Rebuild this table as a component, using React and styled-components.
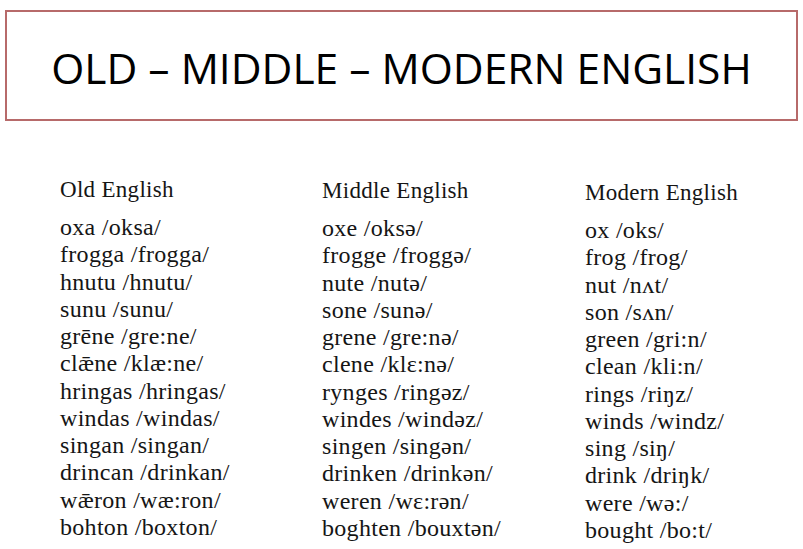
import React from "react";
import styled, { createGlobalStyle } from "styled-components";

const Global = createGlobalStyle`
  html, body { margin: 0; padding: 0; background: #fff; }
  body { width: 803px; height: 549px; overflow: hidden; }
`;

const Page = styled.div`
  width: 803px;
  height: 549px;
  box-sizing: border-box;
  padding: 10px 5px 0 5px;
  background: #fff;
`;

const TitleBox = styled.div`
  height: 111px;
  box-sizing: border-box;
  border: 2px solid #b76a6a;
  display: flex;
  align-items: center;
  justify-content: center;
`;

const Title = styled.h1`
  margin: 0;
  font-family: "Open Sans", "Liberation Sans", sans-serif;
  font-weight: 400;
  font-size: 42.5px;
  line-height: 1;
  color: #000;
  white-space: nowrap;
  padding-top: 6px;
`;

const Columns = styled.div`
  display: grid;
  grid-template-columns: 262px 263px 1fr;
  padding: 56px 0 0 55px;
  font-family: "Liberation Serif", "Times New Roman", serif;
  color: #151515;
`;

const Column = styled.div`
  display: flex;
  flex-direction: column;
  padding-top: ${(p) => p.$shift || 0}px;
`;

const Heading = styled.div`
  font-size: 23px;
  line-height: 26px;
  letter-spacing: 0.3px;
  margin-bottom: 11px;
`;

const Row = styled.div`
  font-size: 24px;
  line-height: 27.25px;
  letter-spacing: 0.3px;
  white-space: nowrap;
`;

const data = [
  {
    title: "Old English",
    shift: 0,
    rows: [
      "oxa /oksa/",
      "frogga /frogga/",
      "hnutu /hnutu/",
      "sunu /sunu/",
      "grēne /gre:ne/",
      "clǣne /klæ:ne/",
      "hringas /hringas/",
      "windas /windas/",
      "singan /singan/",
      "drincan /drinkan/",
      "wǣron /wæ:ron/",
      "bohton /boxton/",
    ],
  },
  {
    title: "Middle English",
    shift: 1,
    rows: [
      "oxe /oksə/",
      "frogge /froggə/",
      "nute /nutə/",
      "sone /sunə/",
      "grene /gre:nə/",
      "clene /klɛ:nə/",
      "rynges /ringəz/",
      "windes /windəz/",
      "singen /singən/",
      "drinken /drinkən/",
      "weren /wɛ:rən/",
      "boghten /bouxtən/",
    ],
  },
  {
    title: "Modern English",
    shift: 3,
    rows: [
      "ox /oks/",
      "frog /frog/",
      "nut /nʌt/",
      "son /sʌn/",
      "green /gri:n/",
      "clean /kli:n/",
      "rings /riŋz/",
      "winds /windz/",
      "sing /siŋ/",
      "drink /driŋk/",
      "were /wə:/",
      "bought /bo:t/",
    ],
  },
];

export default function App() {
  return (
    <>
      <Global />
      <Page>
        <TitleBox>
          <Title>OLD – MIDDLE – MODERN ENGLISH</Title>
        </TitleBox>
        <Columns>
          {data.map((c) => (
            <Column key={c.title} $shift={c.shift}>
              <Heading>{c.title}</Heading>
              {c.rows.map((r) => (
                <Row key={r}>{r}</Row>
              ))}
            </Column>
          ))}
        </Columns>
      </Page>
    </>
  );
}
